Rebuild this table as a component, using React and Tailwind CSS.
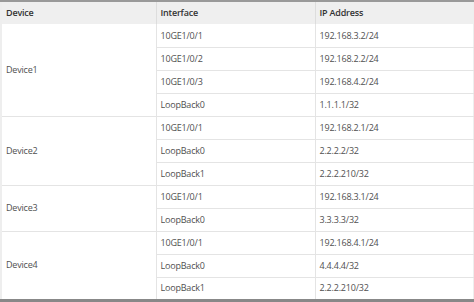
const data = [
  {
    device: 'Device1',
    rows: [
      ['10GE1/0/1', '192.168.3.2/24'],
      ['10GE1/0/2', '192.168.2.2/24'],
      ['10GE1/0/3', '192.168.4.2/24'],
      ['LoopBack0', '1.1.1.1/32'],
    ],
  },
  {
    device: 'Device2',
    rows: [
      ['10GE1/0/1', '192.168.2.1/24'],
      ['LoopBack0', '2.2.2.2/32'],
      ['LoopBack1', '2.2.2.210/32'],
    ],
  },
  {
    device: 'Device3',
    rows: [
      ['10GE1/0/1', '192.168.3.1/24'],
      ['LoopBack0', '3.3.3.3/32'],
    ],
  },
  {
    device: 'Device4',
    rows: [
      ['10GE1/0/1', '192.168.4.1/24'],
      ['LoopBack0', '4.4.4.4/32'],
      ['LoopBack1', '2.2.2.210/32'],
    ],
  },
];

export default function App() {
  return (
    <div
      className="w-[474px] h-[302px] overflow-hidden bg-white"
      style={{ fontFamily: '"Open Sans", "Noto Sans", sans-serif' }}
    >
      <table className="w-full table-fixed border-collapse text-[9px] tracking-[-0.2px] text-[#505050] border-t-2 border-t-[#999] border-b-[3px] border-b-[#888] border-l-2 border-l-[#eee] border-r border-r-[#eee]">
        <colgroup>
          <col className="w-[155px]" />
          <col className="w-[159px]" />
          <col />
        </colgroup>
        <thead>
          <tr className="h-[23px] bg-[#efefef] text-[#333]">
            <th className="text-left font-semibold px-[4px] border-r border-[#ddd]">Device</th>
            <th className="text-left font-semibold px-[4px] border-r border-[#ddd]">Interface</th>
            <th className="text-left font-semibold px-[4px]">IP Address</th>
          </tr>
        </thead>
        <tbody>
          {data.map((g) =>
            g.rows.map((r, i) => (
              <tr key={g.device + i} className="h-[23px] border-b border-[#e4e4e4]">
                {i === 0 && (
                  <td rowSpan={g.rows.length} className="px-[4px] border-r border-[#e4e4e4] align-middle">
                    {g.device}
                  </td>
                )}
                <td className="px-[4px] border-r border-[#e4e4e4]">{r[0]}</td>
                <td className="px-[4px]">{r[1]}</td>
              </tr>
            ))
          )}
        </tbody>
      </table>
    </div>
  );
}
